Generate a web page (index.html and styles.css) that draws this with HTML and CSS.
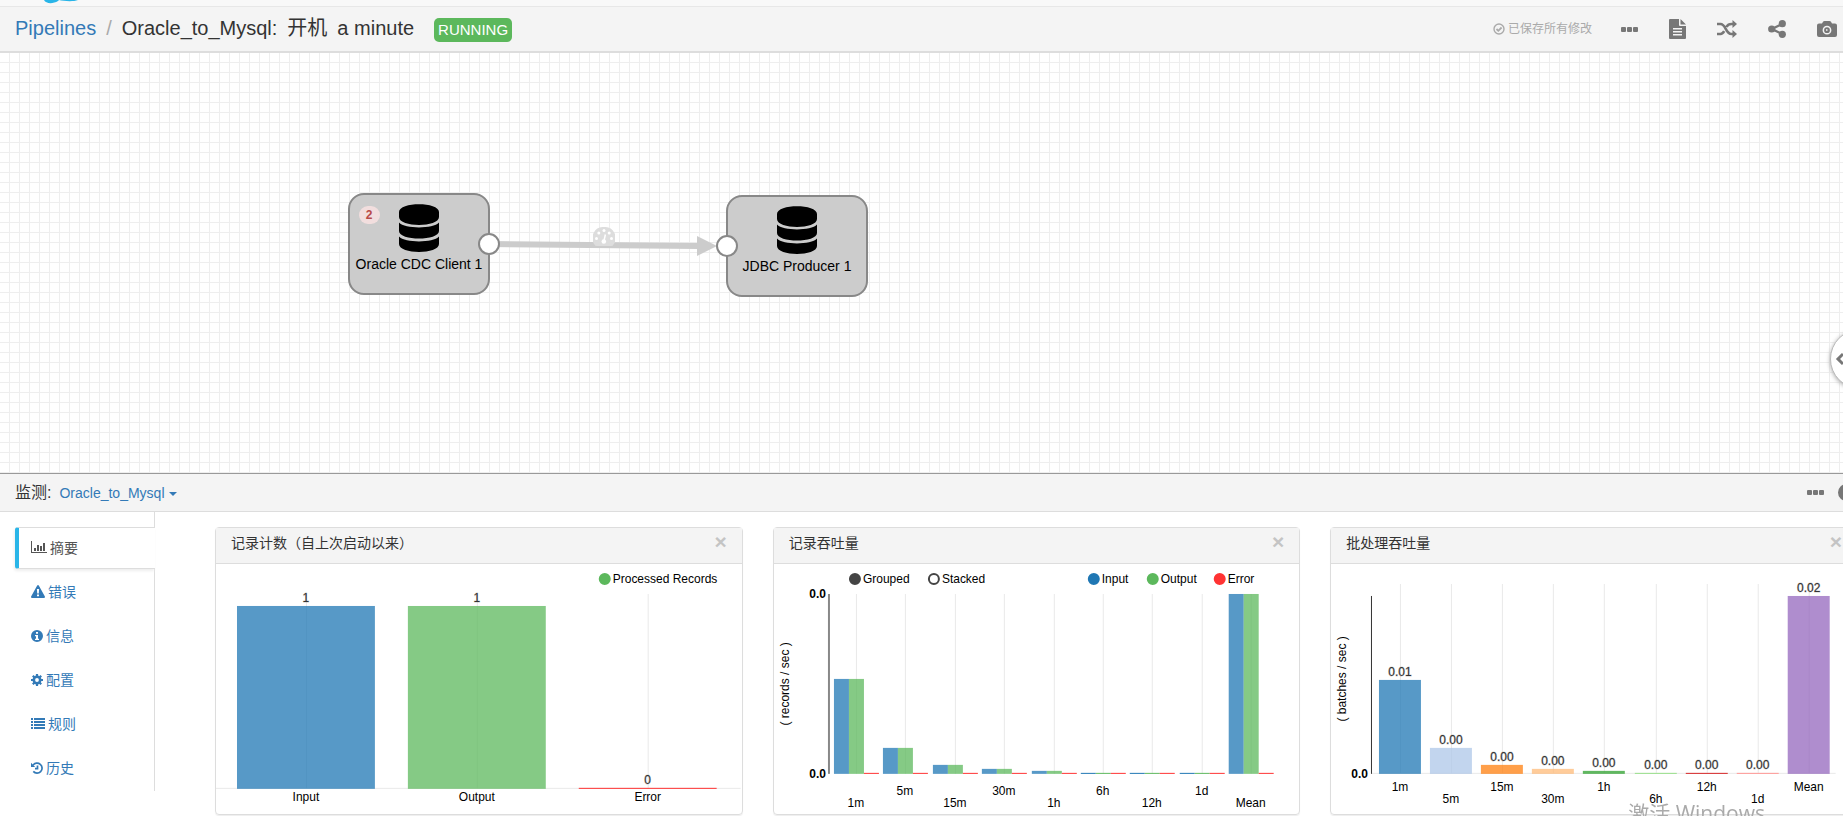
FILE: index.html
```html
<!DOCTYPE html>
<html lang="zh-CN">
<head>
  <meta charset="UTF-8" />
  <meta name="viewport" content="width=device-width, initial-scale=1.0" />
  <title>Oracle_to_Mysql</title>
  <link rel="stylesheet" href="styles.css">
</head>
<body>
  <!-- icon set -->
  <svg class="sprite" aria-hidden="true">
    <symbol id="i-ellipsis" viewBox="0 0 17 5">
      <rect x="0" y="0" width="5" height="5" rx="1"/><rect x="6" y="0" width="5" height="5" rx="1"/><rect x="12" y="0" width="5" height="5" rx="1"/>
    </symbol>
    <symbol id="i-file" viewBox="0 0 17 20">
      <path fill-rule="evenodd" d="M0 1Q0 0 1 0H10V6Q10 7 11 7H17V19Q17 20 16 20H1Q0 20 0 19ZM4 9V10.500H13V9ZM4 12V13.500H13V12ZM4 15V16.500H13V15ZM11.500 0L17 5.500H11.500Z"/>
    </symbol>
    <symbol id="i-random" viewBox="0 0 20 18">
      <path d="M0 4H3.500C9 4 8.500 14 14.500 14H16M0 14H3.500C5.500 14 6.400 12.700 7.200 11.200M9.500 6.800C10.400 5.200 11.800 4 14.500 4H16" fill="none" stroke="currentColor" stroke-width="2.600"/>
      <path d="M15.500 0L20 4L15.500 8ZM15.500 10L20 14L15.500 18Z"/>
    </symbol>
    <symbol id="i-share" viewBox="0 0 18 18">
      <path d="M14 4L4 9L14 14" fill="none" stroke="currentColor" stroke-width="2.400"/>
      <circle cx="14.300" cy="3.700" r="3.600"/><circle cx="3.700" cy="9" r="3.600"/><circle cx="14.300" cy="14.300" r="3.600"/>
    </symbol>
    <symbol id="i-camera" viewBox="0 0 20 16">
      <path fill-rule="evenodd" d="M2 2.500H5L6 .8Q6.500 0 7.500 0H12.500Q13.500 0 14 .8L15 2.500H18Q20 2.500 20 4.500V14Q20 16 18 16H2Q0 16 0 14V4.500Q0 2.500 2 2.500ZM10 4.800A4.400 4.400 0 1 0 10 13.600A4.400 4.400 0 1 0 10 4.800Z"/>
      <path fill-rule="evenodd" d="M10 6.300A2.900 2.900 0 1 0 10 12.100A2.900 2.900 0 1 0 10 6.300ZM9 8.200H10.500V9.700H9Z"/>
    </symbol>
    <symbol id="i-saved" viewBox="0 0 12 12">
      <circle cx="6" cy="6" r="5" fill="none" stroke="currentColor" stroke-width="1.400"/>
      <path d="M3.500 6L5.300 7.800L8.600 4.500" fill="none" stroke="currentColor" stroke-width="1.800"/>
    </symbol>
    <symbol id="i-chart" viewBox="0 0 16 13">
      <path d="M0 0H1V11H16V12H0ZM3 7H5V10H3ZM6 4H8V10H6ZM9 5H11V10H9ZM12 2H14V10H12Z"/>
    </symbol>
    <symbol id="i-warning" viewBox="0 0 14 13">
      <path fill-rule="evenodd" d="M6.200 .5Q7 -.4 7.800 .5L13.900 11.600Q14.200 13 13 13H1Q-.2 13 .1 11.600ZM5.900 4L6.200 8.500H7.800L8.100 4ZM6 9.500V11.300H8V9.500Z"/>
    </symbol>
    <symbol id="i-info" viewBox="0 0 12 12">
      <path fill-rule="evenodd" d="M6 0A6 6 0 1 0 6 12A6 6 0 1 0 6 0ZM5 2H7V3.700H5ZM4 5H7V8.700H8V10H4V8.700H5V6.200H4Z"/>
    </symbol>
    <symbol id="i-gear" viewBox="0 0 12 12">
      <circle cx="6" cy="6" r="3.200" fill="none" stroke="currentColor" stroke-width="2.600"/>
      <path d="M6 0V2.500M6 9.500V12M0 6H2.500M9.500 6H12M1.800 1.800L3.500 3.500M8.500 8.500L10.200 10.200M1.800 10.200L3.500 8.500M8.500 3.500L10.200 1.800" stroke="currentColor" stroke-width="2.200"/>
    </symbol>
    <symbol id="i-list" viewBox="0 0 14 11">
      <path d="M0 0H2V2H0ZM3 0H14V2H3ZM0 3H2V5H0ZM3 3H14V5H3ZM0 6H2V8H0ZM3 6H14V8H3ZM0 9H2V11H0ZM3 9H14V11H3Z"/>
    </symbol>
    <symbol id="i-history" viewBox="0 0 12 12">
      <path d="M2 3.200A5 5 0 1 1 2.300 9.400M6.500 3.500V6.700H4" fill="none" stroke="currentColor" stroke-width="1.700"/>
      <path d="M0 .8V5H4.200Z"/>
    </symbol>
    <symbol id="i-database" viewBox="0 0 40 48">
      <path d="M0 8C0 -2.500 40 -2.500 40 8V13C40 23.500 0 23.500 0 13ZM0 18.500C6 25 34 25 40 18.500V27C40 37 0 37 0 27ZM0 32.500C6 39 34 39 40 32.500V40C40 50.500 0 50.500 0 40Z"/>
    </symbol>
    <symbol id="i-gauge" viewBox="0 0 22 19">
      <path d="M11 0A11 11 0 0 0 1.500 17.500Q2.200 19 3.500 19H18.500Q19.800 19 20.500 17.500A11 11 0 0 0 11 0Z"/>
      <g fill="#fff"><circle cx="3.500" cy="11.500" r="1.500"/><circle cx="5.800" cy="6" r="1.500"/><circle cx="11" cy="3.600" r="1.500"/><circle cx="16.200" cy="6" r="1.500"/><circle cx="18.500" cy="11.500" r="1.500"/><circle cx="10.800" cy="14.500" r="2.300"/></g>
      <path d="M10.800 14.500L12.400 7.500" stroke="#fff" stroke-width="1.500"/>
    </symbol>
  </svg>

  <div class="navbar">
    <svg class="logo" viewBox="0 0 40 4" aria-hidden="true"><path d="M0 0L1 1M3 0C5 4 12 4 17 1L18 0M18 0C22 1 32 2 37 0Z" fill="#29b5e8"/></svg>
  </div>

  <header class="titlebar">
    <h1 class="breadcrumb">
      <a href="#">Pipelines</a>
      <span class="slash">/</span>
      <span>Oracle_to_Mysql:</span>
      <span>开机</span>
      <span>a minute</span>
      <span class="label">RUNNING</span>
    </h1>
    <div class="saved"><svg width="12" height="12"><use href="#i-saved"/></svg>已保存所有修改</div>
    <div class="tools">
      <button aria-label="More"><svg width="17" height="5"><use href="#i-ellipsis"/></svg></button>
      <button aria-label="Logs"><svg width="17" height="20"><use href="#i-file"/></svg></button>
      <button aria-label="Auto arrange"><svg width="20" height="18"><use href="#i-random"/></svg></button>
      <button aria-label="Share"><svg width="18" height="18"><use href="#i-share"/></svg></button>
      <button aria-label="Snapshots"><svg width="20" height="16"><use href="#i-camera"/></svg></button>
    </div>
  </header>

  <main class="canvas">
    <svg class="graph" width="900" height="300">
      <path class="edge" d="M489 192L698 194"/>
      <path class="arrow" d="M697 184L717 194L697 204Z"/>
      <use class="gauge" href="#i-gauge" x="593" y="175" width="22" height="19"/>

      <g class="node">
        <rect x="349" y="142" width="140" height="100" rx="15"/>
        <use href="#i-database" x="399" y="152" width="40" height="48"/>
        <text x="419" y="217">Oracle CDC Client 1</text>
        <rect class="badge" x="359" y="154" width="21" height="18" rx="9"/>
        <text class="badge-text" x="369" y="167">2</text>
        <circle cx="489" cy="192" r="10"/>
      </g>
      <g class="node">
        <rect x="727" y="144" width="140" height="100" rx="15"/>
        <use href="#i-database" x="777" y="154" width="40" height="48"/>
        <text x="797" y="219">JDBC Producer 1</text>
        <circle cx="727" cy="194" r="10"/>
      </g>
    </svg>
    <button class="drawer" aria-label="Open stage library"><svg width="10" height="14" viewBox="0 0 10 14"><path d="M8 2L3 7L8 12" fill="none" stroke="currentColor" stroke-width="3"/></svg></button>
  </main>

  <section class="monitor">
    <div class="monitor-bar">
      <span class="monitor-title">监测:</span>
      <a href="#">Oracle_to_Mysql<i class="caret"></i></a>
      <div class="monitor-tools">
        <button aria-label="More"><svg width="17" height="5"><use href="#i-ellipsis"/></svg></button>
        <button aria-label="Help"><svg width="17" height="17"><use href="#i-info"/></svg></button>
      </div>
    </div>

    <div class="monitor-body">
      <nav class="tabs">
        <a href="#" class="active"><svg width="16" height="13"><use href="#i-chart"/></svg>摘要</a>
        <a href="#"><svg width="14" height="13"><use href="#i-warning"/></svg>错误</a>
        <a href="#"><svg width="12" height="12"><use href="#i-info"/></svg>信息</a>
        <a href="#"><svg width="12" height="12"><use href="#i-gear"/></svg>配置</a>
        <a href="#"><svg width="14" height="11"><use href="#i-list"/></svg>规则</a>
        <a href="#"><svg width="12" height="12"><use href="#i-history"/></svg>历史</a>
      </nav>

      <div class="panels">
        <article class="panel">
          <div class="panel-head"><h2>记录计数（自上次启动以来）</h2><button aria-label="Close">×</button></div>
          <svg class="chart" id="record-count" viewBox="0 0 526 250"></svg>
        </article>
        <article class="panel">
          <div class="panel-head"><h2>记录吞吐量</h2><button aria-label="Close">×</button></div>
          <svg class="chart" id="record-throughput" viewBox="0 0 526 250"></svg>
        </article>
        <article class="panel">
          <div class="panel-head"><h2>批处理吞吐量</h2><button aria-label="Close">×</button></div>
          <svg class="chart" id="batch-throughput" viewBox="0 0 526 250"></svg>
        </article>
      </div>
    </div>
  </section>

  <div class="watermark">激活 Windows</div>

  <script src="charts.js"></script>
</body>
</html>
```
FILE: styles.css
```css
* {
  box-sizing: border-box;
}
body {
  margin: 0;
  height: 100vh;
  display: flex;
  flex-direction: column;
  overflow: hidden;
  font-family: "Liberation Sans", "Noto Sans CJK SC", sans-serif;
  font-size: 14px;
  line-height: 20px;
  color: #333;
  background: #fff;
}
a {
  color: #337ab7;
  text-decoration: none;
}
button {
  padding: 0;
  border: none;
  background: none;
  color: #777;
  font-family: inherit;
  cursor: pointer;
}
svg {
  display: block;
  flex: none;
  fill: currentColor;
}
.sprite {
  position: absolute;
  width: 0;
  height: 0;
}

/* top bars */
.navbar {
  flex: none;
  height: 7px;
  padding-left: 41px;
  background: #f8f8f8;
  border-bottom: 1px solid #e7e7e7;
}
.logo {
  width: 40px;
  height: 4px;
}
.titlebar {
  flex: none;
  display: flex;
  align-items: center;
  height: 46px;
  padding: 0 6px 0 15px;
  background: #f4f4f4;
  border-bottom: 2px solid #ddd;
}
.breadcrumb {
  display: flex;
  align-items: center;
  gap: 10px;
  margin: 0;
  padding-bottom: 2px;
  font-size: 20px;
  font-weight: normal;
  line-height: 24px;
}
.slash {
  color: #aaa;
}
.label {
  margin: 4px 0 0 10px;
  padding: 0 4px;
  border-radius: 5px;
  background: #5cb85c;
  color: #fff;
  font-size: 15px;
}
.saved {
  display: flex;
  align-items: center;
  gap: 3px;
  margin-left: auto;
  color: #aaa;
  font-size: 12px;
}
.tools {
  display: flex;
  align-items: center;
  gap: 31px;
  margin-left: 29px;
}

/* pipeline canvas */
.canvas {
  flex: 1;
  position: relative;
  overflow: hidden;
  background-image: linear-gradient(#eee 1px, transparent 1px), linear-gradient(90deg, #eee 1px, transparent 1px);
  background-size: 10px 10px;
  background-position: 9px 9px;
}
.graph {
  margin-top: -1px;
}
.edge {
  stroke: #ccc;
  stroke-width: 6px;
}
.arrow {
  fill: #ccc;
}
.gauge {
  color: #ddd;
}
.node rect {
  fill: #ccc;
  stroke: #888;
  stroke-width: 2px;
}
.node circle {
  fill: #fff;
  stroke: #888;
  stroke-width: 2px;
}
.node text {
  fill: #000;
  text-anchor: middle;
}
.node use {
  fill: #000;
}
.node .badge {
  fill: #f2dede;
  stroke: none;
}
.node .badge-text {
  fill: #b94a48;
  font-size: 12px;
  font-weight: bold;
}
.drawer {
  position: absolute;
  right: -47px;
  top: 276px;
  width: 60px;
  height: 60px;
  padding-left: 4px;
  border: 1px solid #bbb;
  border-radius: 50%;
  background: #fff;
  box-shadow: 0 1px 4px #aaa;
}

/* monitoring pane */
.monitor {
  flex: none;
  height: 343px;
  border-top: 1px solid #999;
}
.monitor-bar {
  display: flex;
  align-items: center;
  height: 38px;
  padding-left: 15px;
  background: #f4f4f4;
  border-bottom: 1px solid #ddd;
}
.monitor-title {
  margin-right: 8px;
  font-size: 16px;
}
.caret {
  display: inline-block;
  margin-left: 4px;
  vertical-align: middle;
  border-top: 4px solid;
  border-left: 4px solid transparent;
  border-right: 4px solid transparent;
}
.monitor-tools {
  display: flex;
  align-items: center;
  gap: 14px;
  margin: 0 -12px 0 auto;
}
.monitor-body {
  display: flex;
  align-items: flex-start;
}
.tabs {
  flex: none;
  display: flex;
  flex-direction: column;
  gap: 2px;
  width: 140px;
  height: 279px;
  margin-left: 15px;
  padding-top: 15px;
  background: linear-gradient(#ddd, #ddd) right / 1px 100% no-repeat;
}
.tabs a {
  display: flex;
  align-items: center;
  gap: 3px;
  height: 42px;
  padding: 0 0 1px 16px;
}
.tabs .active {
  padding-left: 12px;
  border: 1px solid #ddd;
  border-left: 4px solid #29b5e8;
  border-right: none;
  border-radius: 3px 0 0 3px;
  background: #fff;
  box-shadow: -1px 2px 3px #eee;
  color: #555;
}
.panels {
  flex: 1;
  display: grid;
  grid-template-columns: repeat(3, 1fr);
  gap: 30px;
  margin: 15px -15px 0 60px;
}
.panel {
  border: 1px solid #ddd;
  border-radius: 4px;
  box-shadow: 0 1px 1px #eee;
}
.panel-head {
  display: flex;
  justify-content: space-between;
  height: 36px;
  padding: 5px 15px 0;
  background: #f4f4f4;
  border-bottom: 1px solid #ddd;
}
.panel-head h2 {
  margin: 0;
  font-size: 14px;
  font-weight: normal;
}
.panel-head button {
  height: 18px;
  color: #c4c4c4;
  font-size: 21px;
  font-weight: bold;
  line-height: 18px;
}

/* charts */
.chart {
  width: 100%;
  fill: #000;
  font-size: 12px;
}
.chart .grid {
  stroke: #e9e9e9;
}
.chart .axis {
  stroke: #888;
  stroke-width: 2px;
}
.chart .axis-thin {
  stroke: #333;
}
.chart .bar {
  fill-opacity: 0.75;
}
.chart .flat {
  fill-opacity: 1;
}
.chart .mid {
  text-anchor: middle;
}
.chart .value {
  fill: #333;
  stroke: #333;
  stroke-opacity: 0.25;
  text-anchor: middle;
}
.chart .tick {
  font-weight: bold;
  text-anchor: end;
}

.watermark {
  position: fixed;
  right: 78px;
  bottom: -12px;
  color: #aaa;
  font-family: "Open Sans", "Noto Sans CJK SC", sans-serif;
  font-size: 21px;
  line-height: 30px;
}
```
FILE: charts.js
```js
const periods = ['1m', '5m', '15m', '30m', '1h', '6h', '12h', '1d', 'Mean'];

function el(chart, name, attrs, text) {
  const node = document.createElementNS('http://www.w3.org/2000/svg', name);
  Object.entries(attrs).forEach(([key, value]) => node.setAttribute(key, value));
  if (text !== undefined) node.textContent = text;
  chart.appendChild(node);
}

function line(chart, cls, x1, y1, x2, y2) {
  el(chart, 'line', { class: cls, x1, y1, x2, y2 });
}

// one-pixel bars are drawn solid so they stay visible
function bar(chart, x, width, bottom, height, fill) {
  el(chart, 'rect', { class: height > 1 ? 'bar' : 'bar flat', x, y: bottom - height, width, height, fill });
}

function label(chart, cls, x, y, text) {
  el(chart, 'text', { class: cls, x, y }, text);
}

function legend(chart, x, color, text, open) {
  el(chart, 'circle', { cx: x, cy: 15, r: 5, fill: open ? '#fff' : color, stroke: color, 'stroke-width': 2 });
  label(chart, '', x + 8, 19, text);
}

function axisTitle(chart, y, text) {
  el(chart, 'text', { class: 'mid', transform: `translate(15 ${y}) rotate(-90)` }, text);
}

// record count
const count = document.getElementById('record-count');
const totals = [['Input', 1, '#1f77b4'], ['Output', 1, '#5cb85c'], ['Error', 0, '#ff3333']];
line(count, 'grid', 0, 224.5, 525, 224.5);
totals.forEach(([name, value, color], i) => {
  const x = 90 + i * 171;
  line(count, 'grid', x + 0.5, 30, x + 0.5, 225);
  bar(count, x - 69, 138, 225, value * 183 || 1, color);
  label(count, 'value', x, value ? 38 : 220, value);
  label(count, 'mid', x, 237, name);
});
legend(count, 389, '#5cb85c', 'Processed Records');

// record throughput
const records = document.getElementById('record-throughput');
const rates = [95, 26, 9, 5, 3, 1, 1, 1, 180];
periods.forEach((period, i) => {
  const x = Math.round(60 + i * 49.4);
  line(records, 'grid', x + 22.5, 30, x + 22.5, 210);
  bar(records, x, 15, 210, rates[i], '#1f77b4');
  bar(records, x + 15, 15, 210, rates[i], '#5cb85c');
  bar(records, x + 30, 15, 210, 1, '#ff3333');
  label(records, 'mid', x + 22, i % 2 ? 231 : 243, period);
});
line(records, 'axis', 55, 30, 55, 210);
label(records, 'tick', 52, 34, '0.0');
label(records, 'tick', 52, 214, '0.0');
axisTitle(records, 120, '( records / sec )');
legend(records, 81, '#444', 'Grouped');
legend(records, 160, '#444', 'Stacked', true);
legend(records, 320, '#1f77b4', 'Input');
legend(records, 379, '#5cb85c', 'Output');
legend(records, 446, '#ff3333', 'Error');

// batch throughput
const batches = document.getElementById('batch-throughput');
const heights = [94, 26, 9, 5, 3, 1, 1, 1, 178];
const values = ['0.01', '0.00', '0.00', '0.00', '0.00', '0.00', '0.00', '0.00', '0.02'];
const colors = ['#1f77b4', '#aec7e8', '#ff7f0e', '#ffbb78', '#2ca02c', '#98df8a', '#d62728', '#ff9896', '#9467bd'];
line(batches, 'grid', 41, 209.5, 505, 209.5);
periods.forEach((period, i) => {
  const x = Math.round(69 + i * 51.1);
  line(batches, 'grid', x + 0.5, 20, x + 0.5, 210);
  bar(batches, x - 21, 42, 210, heights[i], colors[i]);
  label(batches, 'value', x, 206 - heights[i], values[i]);
  label(batches, 'mid', x, i % 2 ? 239 : 227, period);
});
line(batches, 'axis-thin', 40.5, 32, 40.5, 210);
label(batches, 'tick', 37, 214, '0.0');
axisTitle(batches, 115, '( batches / sec )');
```
